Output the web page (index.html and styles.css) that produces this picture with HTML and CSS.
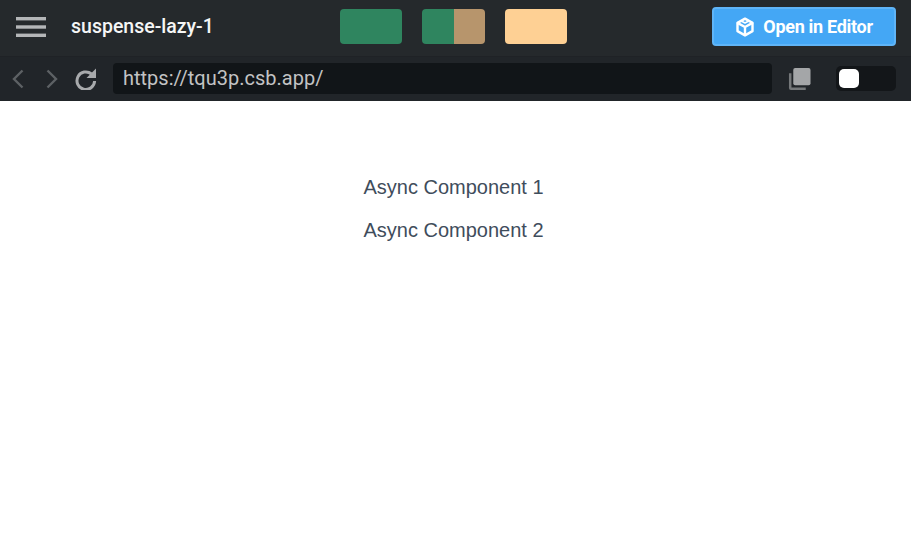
FILE: index.html
```html
<!DOCTYPE html>
<html lang="en">
<head>
<meta charset="utf-8">
<title>suspense-lazy-1</title>
<link rel="stylesheet" href="styles.css">
</head>
<body>
<header class="topbar">
  <svg class="menu-icon" width="30" height="20" viewBox="0 0 30 20"><rect x="0" y="0" width="30" height="3.4" fill="#b4b6b8"/><rect x="0" y="8.3" width="30" height="3.4" fill="#b4b6b8"/><rect x="0" y="16.6" width="30" height="3.4" fill="#b4b6b8"/></svg>
  <div class="title">suspense-lazy-1</div>
  <div class="swatches">
    <div class="swatch swatch-green"></div>
    <div class="swatch swatch-split"><div class="split-left"></div><div class="split-right"></div></div>
    <div class="swatch swatch-peach"></div>
  </div>
  <button class="open-btn">
    <svg width="20" height="20" viewBox="0 0 24 24" fill="none" stroke="#fff" stroke-width="2.9" stroke-linejoin="round" stroke-linecap="round"><path d="M12 2 21 7v10l-9 5-9-5V7z"/><path d="M3.500 7.300 12 12l8.500-4.700M12 12v9.500"/><path d="M7.500 4.700 12 7.200l4.500-2.500" stroke-width="2"/></svg>
    <span>Open in Editor</span>
  </button>
</header>
<nav class="addressbar">
  <svg class="nav-back" width="12" height="20" viewBox="0 0 12 20" fill="none" stroke="#5d6164" stroke-width="2.4"><path d="M10.500 1.500 2 10l8.500 8.500"/></svg>
  <svg class="nav-forward" width="12" height="20" viewBox="0 0 12 20" fill="none" stroke="#5d6164" stroke-width="2.4"><path d="M1.500 1.500 10 10l-8.500 8.500"/></svg>
  <svg class="nav-reload" width="22" height="22" viewBox="0 0 22 22" fill="none"><path d="M16.500 6A8.800 8.800 0 1 0 19.600 13" stroke="#a8aaac" stroke-width="3"/><path d="M21 0.500v9.500H11.500z" fill="#a8aaac"/></svg>
  <div class="url">https://tqu3p.csb.app/</div>
  <svg class="copy-icon" width="23" height="23" viewBox="0 0 24 24"><path d="M1 6.500h2.600V21.400H18.500V24H3a2 2 0 0 1-2-2z" fill="#75787a"/><rect x="5.500" y="1" width="18" height="18" rx="2" fill="#a4a6a8"/></svg>
  <div class="toggle"><div class="knob"></div></div>
</nav>
<main class="content">
  <p>Async Component 1</p>
  <p>Async Component 2</p>
</main>
</body>
</html>
```
FILE: styles.css
```css
* { box-sizing: border-box; }
html, body { margin: 0; padding: 0; height: 100%; background: #fff; }
body { font-family: Roboto, sans-serif; overflow: hidden; }
.topbar {
  height: 56px;
  background: #25292c;
  display: flex;
  align-items: center;
  padding: 0 0 3px 16px;
}
.menu-icon { flex: none; }
.title {
  margin-left: 25px;
  width: 269px;
  font-size: 19.500px;
  font-weight: 500;
  color: #f5f6f6;
  white-space: nowrap;
}
.swatches { display: flex; gap: 20px; width: 372px; }
.swatch { width: 62px; height: 35px; border-radius: 4px; overflow: hidden; }
.swatch-green { background: #2f855f; }
.swatch-split { display: flex; width: 63px; }
.split-left { width: 32px; background: #2f855f; }
.split-right { flex: 1; background: #b7956c; }
.swatch-peach { background: #fed094; }
.open-btn {
  width: 184px;
  height: 39px;
  border: 2px solid #5fb4f7;
  border-radius: 4px;
  background: #44a7f5;
  color: #fff;
  font-family: Roboto, sans-serif;
  font-weight: 700;
  font-size: 18px;
  letter-spacing: -0.3px;
  display: flex;
  align-items: center;
  justify-content: center;
  gap: 8px;
  padding: 0;
}
.addressbar {
  height: 45px;
  background: #212529;
  border-top: 1px solid #1f2226;
  display: flex;
  align-items: center;
  padding: 0 0 1px 12px;
}
.nav-forward { margin-left: 22px; }
.nav-reload { margin-left: 17px; }
.url {
  margin-left: 16px;
  width: 659px;
  height: 31px;
  background: #111518;
  border-radius: 4px;
  color: #c2c3c4;
  font-size: 20px;
  line-height: 31px;
  padding-left: 10px;
}
.copy-icon { margin-left: 16px; }
.toggle {
  margin-left: 25px;
  width: 60px;
  height: 25px;
  background: #131619;
  border-radius: 5px;
  padding: 3px;
}
.knob { width: 20px; height: 19px; background: #fff; border-radius: 5px; }
.content {
  padding: 75px 4px 0 0;
  text-align: center;
  font-family: "Liberation Sans", Arial, sans-serif;
  font-size: 20px;
  color: #3f4d5c;
}
.content p { margin: 0 0 20px; line-height: 23px; }
```
